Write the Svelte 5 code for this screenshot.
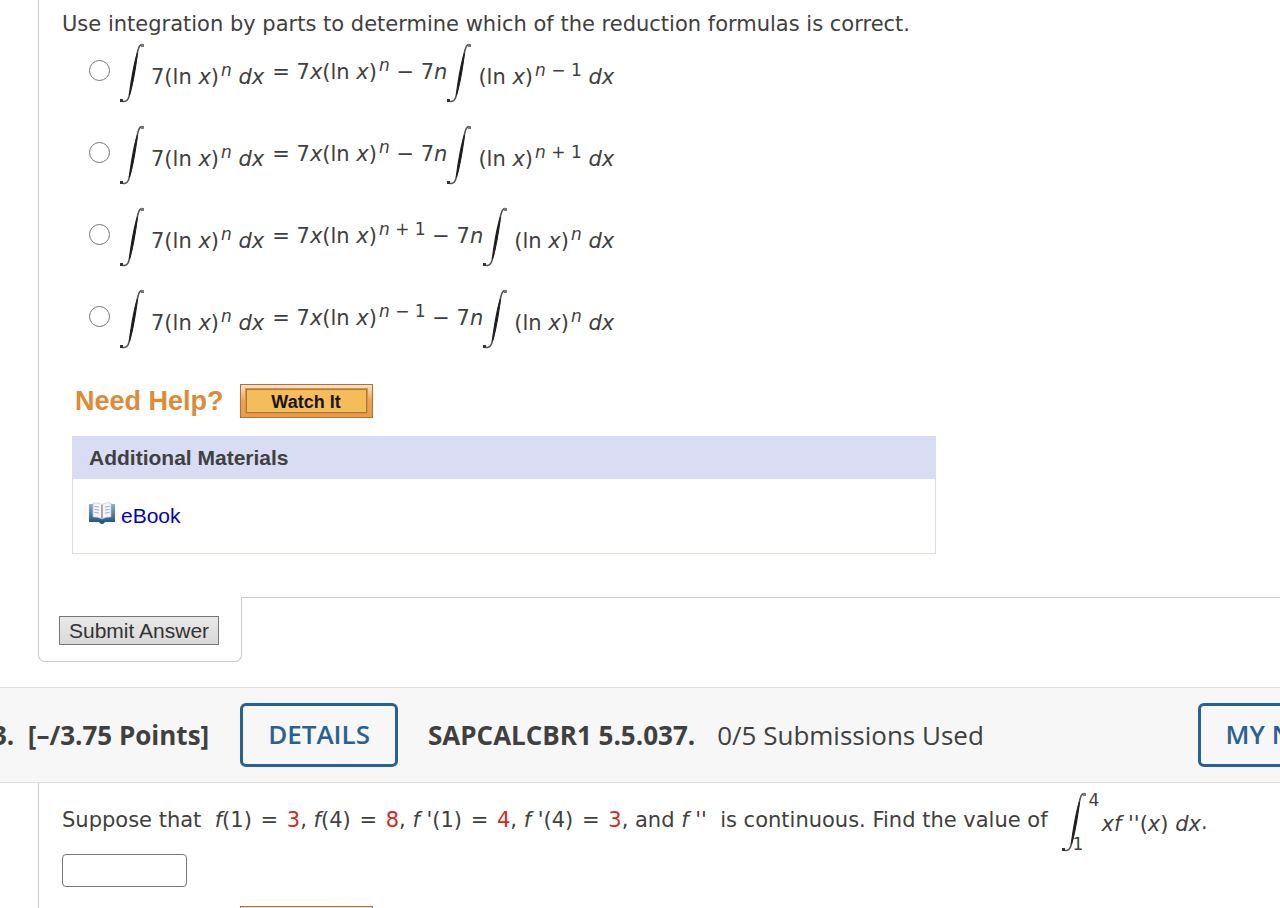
<script lang="ts">
  const options = [
    { id: "a", outer: "", inner: "− 1" },
    { id: "b", outer: "", inner: "+ 1" },
    { id: "c", outer: "+ 1", inner: "" },
    { id: "d", outer: "− 1", inner: "" },
  ];

  let selected = $state("");
  let answer = $state("");
</script>

{#snippet integral()}
  <svg class="integral" viewBox="0 0 24 60" aria-hidden="true">
    <path
      d="M23.500 2.200C21.500 1 19.500 1.500 18.300 6C16.800 11 16 17 14.200 28C12 41 10.500 51 8 56C6.500 59 3 59 .5 57.500"
      fill="none"
      stroke="#555"
      stroke-width="1.600"
    />
    <path d="M17.500 10C16.200 20 12.500 43 9.300 52C11 39 14 20 17.500 10Z" fill="#111" stroke="#222" stroke-width="1.200" />
    <rect x="0" y="56" width="3" height="3" fill="#333" />
    <rect x="21" y="1" width="3" height="3" fill="#777" />
  </svg>
{/snippet}

{#snippet help()}
  <div class="help">
    <strong class="help-title">Need Help?</strong>
    <button class="watch" type="button"><span>Watch It</span></button>
  </div>
{/snippet}

<div class="page">
  <section class="question">
    <p class="prompt">Use integration by parts to determine which of the reduction formulas is correct.</p>

    <div class="options" role="radiogroup" aria-label="Reduction formulas">
      {#each options as option (option.id)}
        <div class="option">
          <input id="option-{option.id}" type="radio" name="formula" value={option.id} bind:group={selected} />
          <label class="formula" for="option-{option.id}">
            {@render integral()}
            <span class="integrand">7(ln <i>x</i>)<sup><i>n</i></sup> <i>dx</i></span>
            <span class="term">= 7<i>x</i>(ln <i>x</i>)<sup><i>n</i>{option.outer && ` ${option.outer}`}</sup> − 7<i>n</i></span>
            {@render integral()}
            <span class="integrand">(ln <i>x</i>)<sup><i>n</i>{option.inner && ` ${option.inner}`}</sup> <i>dx</i></span>
          </label>
        </div>
      {/each}
    </div>

    {@render help()}

    <div class="materials">
      <h3>Additional Materials</h3>
      <a href="#ebook">
        <svg class="book" viewBox="0 0 26 22" aria-hidden="true">
          <defs>
            <linearGradient id="cover" x1="0" y1="0" x2="0" y2="1">
              <stop offset="0" stop-color="#8fb0cc" />
              <stop offset="1" stop-color="#174c80" />
            </linearGradient>
          </defs>
          <path d="M0 2H26V20H16Q15 22 13 22Q11 22 10 20H0Z" fill="url(#cover)" />
          <path d="M4 1Q9 0 13 2.500Q17 0 22 1V15Q17 14.500 13 17Q9 14.500 4 15Z" fill="#f4f5f7" stroke="#b8c4d0" stroke-width=".6" />
          <path d="M13 3V16.500" stroke="#777" stroke-width="1.200" />
          <path d="M5.500 4.500L10 5M5.500 7.500L10 8M5.500 10.500L10 11M16 5L20.500 4.500M16 8L20.500 7.500M16 11L20.500 10.500" stroke="#aaa" stroke-width="1" />
        </svg>
        <span>eBook</span>
      </a>
    </div>
  </section>

  <div class="submit-row">
    <div class="submit-tab">
      <button class="submit" type="button">Submit Answer</button>
    </div>
    <div class="submit-rule"></div>
  </div>

  <header class="bar">
    <strong class="points">3.&nbsp; [–/3.75 Points]</strong>
    <button class="action" type="button">DETAILS</button>
    <strong class="code">SAPCALCBR1 5.5.037.</strong>
    <span class="used">0/5 Submissions Used</span>
    <button class="action notes" type="button">MY NOTES</button>
  </header>

  <section class="question next">
    <div class="line">
      <label for="answer">
        Suppose that&nbsp; <i>f</i>(1) <span class="eq">=</span> <b>3</b>, <i>f</i>(4) <span class="eq">=</span> <b>8</b>, <i>f '</i>(1) <span class="eq">=</span> <b>4</b>, <i>f '</i>(4) <span class="eq">=</span> <b>3</b>, and <i>f ''</i>&nbsp; is continuous. Find the value of
      </label>
      <span class="definite">
        {@render integral()}
        <span class="upper">4</span>
        <span class="lower">1</span>
      </span>
      <span class="integrand"><i>xf ''</i>(<i>x</i>) <i>dx</i></span>
      <span>.</span>
    </div>
    <input id="answer" class="answer" type="text" bind:value={answer} />
    {@render help()}
  </section>
</div>

<style>
  :global(body) {
    margin: 0;
    background: #fff;
  }

  .page {
    height: 100vh;
    overflow: hidden;
    color: #404040;
    font-family: Verdana, "DejaVu Sans", sans-serif;
    font-size: 21px;
  }

  .question {
    margin-left: 38px;
    padding: 8px 0 43px 23px;
    border-left: 1px solid #ccc;
  }

  .prompt {
    margin: 0;
    line-height: 32px;
    white-space: nowrap;
  }

  .option {
    display: flex;
    align-items: center;
    height: 66px;
    margin-bottom: 16px;
    padding-left: 27px;
  }

  .option input {
    flex: none;
    width: 21px;
    height: 21px;
    margin: 0 10px 6px 0;
    appearance: none;
    border: 1px solid #767676;
    border-radius: 50%;
    background: #fff;
  }

  .option input:checked {
    background: radial-gradient(#0075ff 50%, #fff 55%);
  }

  .formula {
    display: flex;
    align-items: center;
    line-height: 24px;
    white-space: nowrap;
  }

  .integral {
    flex: none;
    width: 24px;
    height: 60px;
  }

  .integrand {
    padding: 7px 8px 0 7px;
  }

  .term {
    padding-bottom: 3px;
  }

  sup {
    margin-left: 2px;
    font-size: 17px;
    line-height: 0;
    vertical-align: 8px;
  }

  .help {
    display: flex;
    align-items: center;
    gap: 16px;
    margin: 32px 0 18px 13px;
    font-family: "Liberation Sans", Arial, sans-serif;
  }

  .help-title {
    color: #e08a35;
    font-size: 27px;
    line-height: 34px;
  }

  .watch {
    width: 133px;
    height: 34px;
    padding: 4px 5px;
    border: 1px solid #ad7238;
    background: linear-gradient(#fbe3cb, #f0a04c 50%, #ee9a45);
    font: bold 18px/24px "Liberation Sans", Arial, sans-serif;
    color: #1a1405;
    cursor: pointer;
  }

  .watch span {
    display: block;
    height: 22px;
    border: 1px solid #a87838;
    outline: 1px solid #d8964d;
    background: #f3bd5b;
  }

  .materials {
    width: 862px;
    margin-left: 10px;
    border: 1px solid #d8ddf3;
    font-family: "Liberation Sans", Arial, sans-serif;
  }

  .materials h3 {
    margin: 0;
    padding: 0 16px;
    background: #d8ddf3;
    font-size: 21px;
    line-height: 42px;
  }

  .materials a {
    display: inline-flex;
    gap: 6px;
    padding: 23px 16px;
    color: #0000c8;
    line-height: 28px;
    text-decoration: none;
  }

  .book {
    width: 26px;
    height: 22px;
  }

  .submit-row {
    display: flex;
    margin-left: 38px;
  }

  .submit-tab {
    padding: 19px 22px 16px 20px;
    border: 1px solid #ccc;
    border-top: 0;
    border-radius: 0 0 7px 7px;
  }

  .submit-rule {
    flex: 1;
    border-top: 1px solid #ccc;
  }

  .submit {
    display: block;
    height: 29px;
    padding: 0 9px;
    border: 1px solid #767676;
    background: linear-gradient(#e9e9e9, #d9d9d9);
    font: 21px/26px "Liberation Sans", Arial, sans-serif;
    color: #333;
  }

  .bar {
    display: flex;
    align-items: center;
    margin: 25px -104px 0 -8px;
    padding: 15px 0;
    border: solid #ddd;
    border-width: 1px 0;
    background: #f7f7f7;
    font-family: "Open Sans", sans-serif;
    font-size: 26px;
    line-height: 36px;
    white-space: nowrap;
  }

  .action {
    height: 64px;
    padding: 0 25px 2px;
    border: 3px solid #286295;
    border-radius: 6px;
    background: transparent;
    color: #286295;
    font: 600 26px/36px "Open Sans", sans-serif;
    cursor: pointer;
  }

  .points {
    margin-right: 31px;
  }

  .code {
    margin: 0 22px 0 30px;
  }

  .notes {
    margin-left: auto;
  }

  .next {
    padding-top: 7px;
  }

  .line {
    display: flex;
    align-items: center;
    height: 64px;
    line-height: 32px;
    white-space: nowrap;
  }

  .line label {
    padding-bottom: 4px;
  }

  .line b {
    color: #d5281b;
    font-weight: normal;
  }

  .eq {
    margin: 0 2px;
  }

  .definite {
    position: relative;
    display: flex;
    margin-left: 14px;
    padding-right: 8px;
    font-size: 17px;
    line-height: 16px;
  }

  .upper,
  .lower {
    position: absolute;
  }

  .upper {
    top: 0;
    left: 27px;
  }

  .lower {
    bottom: 0;
    left: 11px;
  }

  .line .integrand {
    padding: 4px 0 0 8px;
  }

  .answer {
    display: block;
    box-sizing: border-box;
    width: 125px;
    height: 33px;
    border: 1px solid #767676;
    border-radius: 4px;
    font: inherit;
  }

  .next .help {
    margin-top: 19px;
  }
</style>
